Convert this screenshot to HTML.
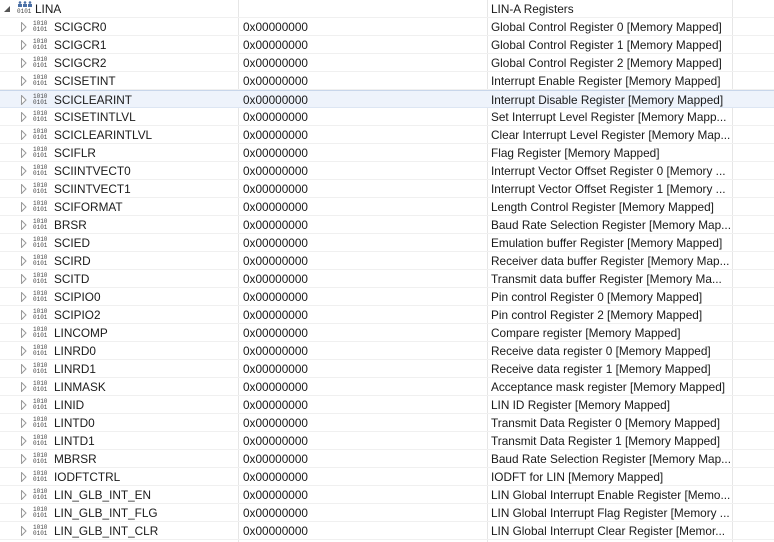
<!DOCTYPE html><html><head><style>
body{margin:0;width:774px;height:542px;overflow:hidden;background:#fff;font-family:"Liberation Sans",sans-serif;font-size:11.8px;color:#1a1a1a;position:relative}
.r{position:absolute;left:0;width:774px;height:18px;box-sizing:border-box;border-bottom:1px solid #f0f0f0}
.r span{position:absolute;top:2px;white-space:nowrap}
.c1{left:54px}.c2{left:243px}.c3{left:491px}
.v{position:absolute;top:0;width:1px;height:542px;background:#e6e6e6}
.ar{position:absolute;left:21px;top:4px}
.ic{position:absolute;left:33px;top:3px;font-size:6px;line-height:6px;font-family:"Liberation Mono",monospace;color:#444}
.hl{background:#eef3fb;border-top:1px solid #c8d6ea;border-bottom:1px solid #dde6f3}
</style></head><body>
<div class="v" style="left:238px"></div><div class="v" style="left:487px"></div><div class="v" style="left:732px"></div>
<div class="r" style="top:0"><svg style="position:absolute;left:4px;top:6px" width="7" height="7"><path d="M6 0V6H0Z" fill="#555"/></svg><svg style="position:absolute;left:17px;top:1px" width="16" height="6"><g fill="#4a6fa5"><circle cx="3" cy="1.5" r="1.3"/><circle cx="8" cy="1.5" r="1.3"/><circle cx="13" cy="1.5" r="1.3"/><rect x="1" y="3" width="4" height="3"/><rect x="6" y="3" width="4" height="3"/><rect x="11" y="3" width="4" height="3"/></g></svg><div class="ic" style="left:17px;top:9px">0101</div><span style="left:35px">LINA</span><span class="c3">LIN-A Registers</span></div>
<div id="rows"></div>
<script>
var d=[["SCIGCR0","Global Control Register 0 [Memory Mapped]"],["SCIGCR1","Global Control Register 1 [Memory Mapped]"],["SCIGCR2","Global Control Register 2 [Memory Mapped]"],["SCISETINT","Interrupt Enable Register [Memory Mapped]"],["SCICLEARINT","Interrupt Disable Register [Memory Mapped]"],["SCISETINTLVL","Set Interrupt Level Register [Memory Mapp..."],["SCICLEARINTLVL","Clear Interrupt Level Register [Memory Map..."],["SCIFLR","Flag Register [Memory Mapped]"],["SCIINTVECT0","Interrupt Vector Offset Register 0 [Memory ..."],["SCIINTVECT1","Interrupt Vector Offset Register 1 [Memory ..."],["SCIFORMAT","Length Control Register [Memory Mapped]"],["BRSR","Baud Rate Selection Register [Memory Map..."],["SCIED","Emulation buffer Register [Memory Mapped]"],["SCIRD","Receiver data buffer Register [Memory Map..."],["SCITD","Transmit data buffer Register [Memory Ma..."],["SCIPIO0","Pin control Register 0 [Memory Mapped]"],["SCIPIO2","Pin control Register 2 [Memory Mapped]"],["LINCOMP","Compare register [Memory Mapped]"],["LINRD0","Receive data register 0 [Memory Mapped]"],["LINRD1","Receive data register 1 [Memory Mapped]"],["LINMASK","Acceptance mask register [Memory Mapped]"],["LINID","LIN ID Register [Memory Mapped]"],["LINTD0","Transmit Data Register 0 [Memory Mapped]"],["LINTD1","Transmit Data Register 1 [Memory Mapped]"],["MBRSR","Baud Rate Selection Register [Memory Map..."],["IODFTCTRL","IODFT for LIN [Memory Mapped]"],["LIN_GLB_INT_EN","LIN Global Interrupt Enable Register [Memo..."],["LIN_GLB_INT_FLG","LIN Global Interrupt Flag Register [Memory ..."],["LIN_GLB_INT_CLR","LIN Global Interrupt Clear Register [Memor..."]];
var h="";d.forEach(function(x,i){h+='<div class="r'+(i==4?' hl':'')+'" style="top:'+(18*(i+1))+'px"><svg class="ar" width="6" height="10"><path d="M0.5 0.5L5 5L0.5 9.5Z" fill="#fff" stroke="#999"/></svg><div class="ic">1010<br>0101</div><span class="c1">'+x[0]+'</span><span class="c2">0x00000000</span><span class="c3">'+x[1]+'</span></div>';});
document.getElementById("rows").innerHTML=h;
</script>
</body></html>
